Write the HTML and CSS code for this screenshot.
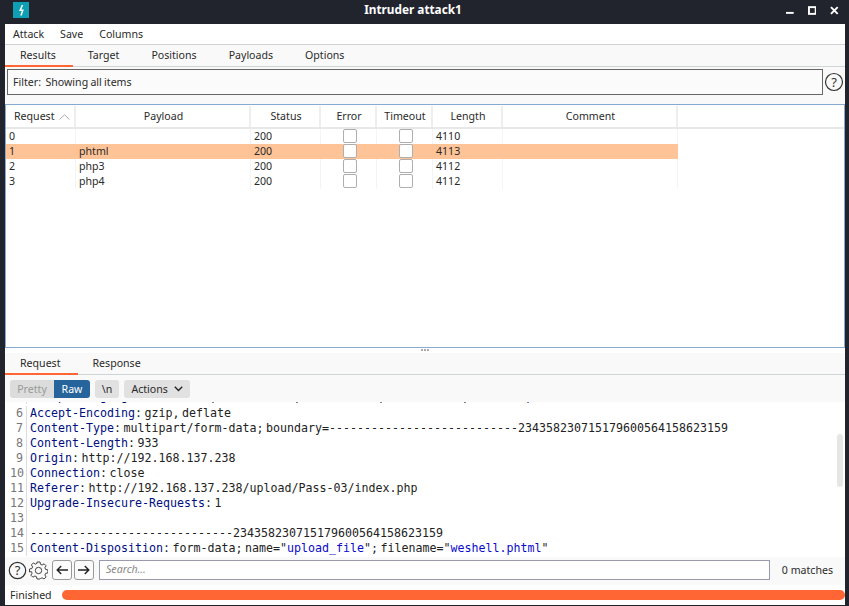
FILE: index.html
```html
<!DOCTYPE html>
<html lang="en">
<head>
<meta charset="utf-8">
<title>Intruder attack1</title>
<link rel="stylesheet" href="styles.css">
</head>
<body>
<div class="window">
  <header class="titlebar">
    <div class="logo">
      <svg width="16" height="16" viewBox="0 0 16 16"><path d="M9.5 3 7.2 8.2h2.6L8 13.5" fill="none" stroke="#fff" stroke-width="1.5"/></svg>
    </div>
    <div class="title">Intruder attack1</div>
    <div class="controls">
      <svg width="8" height="8" viewBox="0 0 8 8"><path d="M0 7h8" stroke="#fff" stroke-width="2"/></svg>
      <svg width="9" height="9" viewBox="0 0 9 9"><rect x="1" y="1" width="7" height="7" fill="none" stroke="#fff" stroke-width="2"/></svg>
      <svg width="9" height="9" viewBox="0 0 9 9"><path d="M1 1l7 7M8 1 1 8" stroke="#fff" stroke-width="2"/></svg>
    </div>
  </header>
  <main class="content">
    <nav class="menu"><span>Attack</span><span>Save</span><span>Columns</span></nav>
    <nav class="tabs top-tabs">
      <span class="tab active">Results</span><span class="tab">Target</span><span class="tab">Positions</span><span class="tab">Payloads</span><span class="tab">Options</span>
    </nav>
    <div class="filter-row">
      <div class="filter">Filter:&nbsp; Showing all items</div>
      <svg class="help" width="20" height="20" viewBox="0 0 20 20"><circle cx="10" cy="10" r="8.5" fill="none" stroke="#333" stroke-width="1.2"/><text x="10" y="14.5" text-anchor="middle" class="help-q">?</text></svg>
    </div>
    <section class="results">
      <div class="row head">
        <div class="cell first sorted">Request <svg width="11" height="6" viewBox="0 0 11 6"><path d="M.5 5.5 5.5.8l5 4.7" fill="none" stroke="#aaa"/></svg></div>
        <div class="cell">Payload</div><div class="cell">Status</div><div class="cell">Error</div><div class="cell">Timeout</div><div class="cell">Length</div><div class="cell">Comment</div>
      </div>
      <div class="row data">
        <div class="cell">0</div><div class="cell"></div><div class="cell">200</div><div class="cell check"><i></i></div><div class="cell check"><i></i></div><div class="cell">4110</div><div class="cell"></div>
      </div>
      <div class="row data selected">
        <div class="cell">1</div><div class="cell">phtml</div><div class="cell">200</div><div class="cell check"><i></i></div><div class="cell check"><i></i></div><div class="cell">4113</div><div class="cell"></div>
      </div>
      <div class="row data">
        <div class="cell">2</div><div class="cell">php3</div><div class="cell">200</div><div class="cell check"><i></i></div><div class="cell check"><i></i></div><div class="cell">4112</div><div class="cell"></div>
      </div>
      <div class="row data">
        <div class="cell">3</div><div class="cell">php4</div><div class="cell">200</div><div class="cell check"><i></i></div><div class="cell check"><i></i></div><div class="cell">4112</div><div class="cell"></div>
      </div>
    </section>
    <div class="splitter"><i></i><i></i><i></i></div>
    <nav class="tabs lower-tabs"><span class="tab active">Request</span><span class="tab">Response</span></nav>
    <div class="toolbar">
      <div class="segment"><span class="seg-off">Pretty</span><span class="seg-on">Raw</span></div>
      <span class="btn newline">\n</span>
      <span class="btn actions">Actions <svg width="9" height="6" viewBox="0 0 9 6"><path d="M.8.8 4.5 4.5 8.2.8" fill="none" stroke="#222" stroke-width="1.4"/></svg></span>
    </div>
    <div class="editor">
      <div class="code">
        <div class="line line-clipped"><b>5</b><code><span class="k">Accept-Language</span>: zh-CN,zh;q=0.8,zh-TW;q=0.7,zh-HK;q=0.5,en-US;q=0.3,en;q=0.2</code></div>
        <div class="line"><b>6</b><code><span class="k">Accept-Encoding</span>: gzip, deflate</code></div>
        <div class="line"><b>7</b><code><span class="k">Content-Type</span>: multipart/form-data; boundary=---------------------------234358230715179600564158623159</code></div>
        <div class="line"><b>8</b><code><span class="k">Content-Length</span>: 933</code></div>
        <div class="line"><b>9</b><code><span class="k">Origin</span>: http://192.168.137.238</code></div>
        <div class="line"><b>10</b><code><span class="k">Connection</span>: close</code></div>
        <div class="line"><b>11</b><code><span class="k">Referer</span>: http://192.168.137.238/upload/Pass-03/index.php</code></div>
        <div class="line"><b>12</b><code><span class="k">Upgrade-Insecure-Requests</span>: 1</code></div>
        <div class="line"><b>13</b><code></code></div>
        <div class="line"><b>14</b><code>-----------------------------234358230715179600564158623159</code></div>
        <div class="line"><b>15</b><code><span class="k">Content-Disposition</span>: form-data; name="<span class="v">upload_file</span>"; filename="<span class="v">weshell.phtml</span>"</code></div>
      </div>
      <div class="scrollbar"><i></i></div>
    </div>
    <div class="searchbar">
      <svg width="19" height="19" viewBox="0 0 19 19"><circle cx="9.5" cy="9.5" r="8.2" fill="none" stroke="#333" stroke-width="1.2"/><text x="9.5" y="14" text-anchor="middle" class="help-q">?</text></svg>
      <svg width="19" height="19" viewBox="0 0 19 19"><g fill="none" stroke="#444" stroke-width="1"><circle cx="9.5" cy="9.5" r="3.2"/><path d="M8 1h3l.5 2.3 1.6.7 2-1.2 2 2-1.2 2 .7 1.6 2.3.5v3l-2.3.5-.7 1.6 1.2 2-2 2-2-1.2-1.6.7L11 18H8l-.5-2.3-1.6-.7-2 1.2-2-2 1.2-2-.7-1.6L.5 11V8l2.4-.5.7-1.6-1.2-2 2-2 2 1.2 1.6-.7z"/></g></svg>
      <span class="nav-btn"><svg width="12" height="10" viewBox="0 0 12 10"><path d="M12 5H1.2M5.2 1 1.2 5l4 4" fill="none" stroke="#222" stroke-width="1.4"/></svg></span>
      <span class="nav-btn"><svg width="12" height="10" viewBox="0 0 12 10"><path d="M0 5h10.8M6.8 1l4 4-4 4" fill="none" stroke="#222" stroke-width="1.4"/></svg></span>
      <div class="search">Search...</div>
      <span class="matches">0 matches</span>
    </div>
    <footer class="status">
      <span class="status-text">Finished</span>
      <div class="progress"></div>
    </footer>
  </main>
</div>
</body>
</html>
```
FILE: styles.css
```css
* { box-sizing: border-box; }
html, body { margin: 0; padding: 0; height: 100%; background: #21242d; overflow: hidden; }
body { font-family: "Noto Sans", sans-serif; font-size: 10.6px; color: #2a2a2a; }
.window { width: 849px; height: 606px; display: flex; flex-direction: column; }
.titlebar { height: 24px; flex: none; display: flex; align-items: center; padding: 0 10px 0 13px; color: #fff; }
.logo { width: 16px; height: 16px; background: #0f9fb5; flex: none; margin-top: -4px; }
.logo svg { display: block; }
.title { flex: 1; text-align: center; font-weight: 700; font-size: 11.8px; margin: -6px 0 0 11px; }
.controls { display: flex; gap: 14px; align-items: center; width: 53px; margin-top: -4px; }
.content { margin: 0 4px 1px 5px; flex: 1; display: flex; flex-direction: column; background: #fff; min-height: 0; }
.menu { height: 21px; flex: none; display: flex; gap: 16px; align-items: center; padding: 0 8px 1px; background: #fff; border-bottom: 1px solid #cfd2d2; }
.tabs { display: flex; flex: none; background: #f9f9f9; border-bottom: 1px solid #cdd5d5; height: 22px; }
.tab { padding: 0 17px 2px 15px; display: flex; align-items: center; height: 22px; }
.tab.active { border-bottom: 2px solid #ff6633; padding-bottom: 0; }
.filter-row { height: 37px; flex: none; display: flex; align-items: flex-start; background: #f9f9f9; padding: 2px 1px 0 2px; gap: 1px; }
.filter { width: 816px; height: 26px; border: 1px solid #666; background: #fbfbfb; padding: 0 0 0 5px; display: flex; align-items: center; word-spacing: -0.5px; }
.help { margin-top: 3px; }
.help-q { font-family: "Noto Sans", sans-serif; font-size: 13px; fill: #333; }
.results { height: 244px; flex: none; border: 1px solid #86aad0; background: #fff; }
.row { display: grid; grid-template-columns: 70px 175px 70px 56px 56px 70px 175px; width: 672px; }
.head { width: 100%; height: 24px; border-bottom: 2px solid #e8e8e8; grid-template-columns: 70px 175px 70px 56px 56px 70px 175px 1fr; padding-top: 1px; }
.head .cell { text-align: center; border-right: 2px solid #eee; line-height: 21px; height: 21px; padding-left: 2px; }
.head .first { text-align: left; padding-left: 8px; }
.head .first svg { margin-left: 2px; }
.data { height: 15px; }
.data .cell { line-height: 15px; padding-left: 3px; border-right: 1px solid #f4f4f4; }
.selected { background: #fec396; }
.selected .cell { border-right-color: transparent; }
.check { display: flex; justify-content: center; }
.data .check { padding-left: 3px; }
.check i { width: 14px; height: 14px; background: #fff; border: 1px solid #aeaeae; border-radius: 2px; display: block; }
.splitter { height: 5px; flex: none; background: #fff; display: flex; gap: 1px; justify-content: center; align-items: flex-start; padding-top: 1px; }
.splitter i { width: 2px; height: 2px; background: #aaa; }
.toolbar { height: 27px; flex: none; display: flex; align-items: center; gap: 5px; padding: 1px 5px 0; background: #f9f9f9; }
.segment { display: flex; height: 18px; border-radius: 3px; overflow: hidden; line-height: 18px; text-align: center; }
.seg-off { width: 44px; background: #dcdcdc; color: #999; }
.seg-on { width: 36px; background: #26649c; color: #fff; }
.btn { height: 18px; background: #e1e1e1; border-radius: 3px; line-height: 18px; text-align: center; }
.newline { width: 24px; }
.actions { width: 66px; }
.actions svg { margin-left: 3px; vertical-align: 1px; }
.editor { height: 155px; flex: none; display: flex; background: #fff; overflow: hidden; }
.code { flex: 1; margin-top: -13px; min-width: 0; }
.line { display: flex; height: 15px; line-height: 15px; font-family: "DejaVu Sans Mono", monospace; font-size: 11.63px; }
.line-clipped { margin-bottom: 2px; }
.line b { width: 17px; padding-right: 3px; flex: none; text-align: right; font-weight: 400; color: #777; border-right: 1px solid #ddd; margin: 0 3px 0 5px; }
.line code { font: inherit; white-space: pre; word-spacing: -4.5px; color: #222; }
.k { color: #000f80; }
.v { color: #0a0acb; }
.scrollbar { width: 6px; flex: none; margin-right: 2px; padding-top: 32px; }
.scrollbar i { display: block; width: 6px; height: 53px; background: #e6e6e6; border-radius: 3px; }
.searchbar { height: 28px; flex: none; display: flex; align-items: center; padding: 0 12px 2px 3px; background: #f9f9f9; gap: 2px; }
.nav-btn { width: 20px; height: 20px; border: 1px solid #999; border-radius: 3px; display: flex; align-items: center; justify-content: center; background: #fbfbfb; }
.searchbar svg + .nav-btn { margin-left: 2px; }
.search { width: 671px; height: 20px; margin-left: 3px; border: 1px solid #9a9aae; background: #fff; color: #888; font-style: italic; padding-left: 6px; line-height: 17px; }
.matches { margin-left: auto; padding: 0 0 0 8px; }
.status { flex: 1; display: flex; align-items: center; gap: 10px; padding-left: 5px; background: #fff; }
.status-text { margin-top: -1px; }
.progress { flex: 1; height: 10px; background: #ff6633; border-radius: 5px; }
```
